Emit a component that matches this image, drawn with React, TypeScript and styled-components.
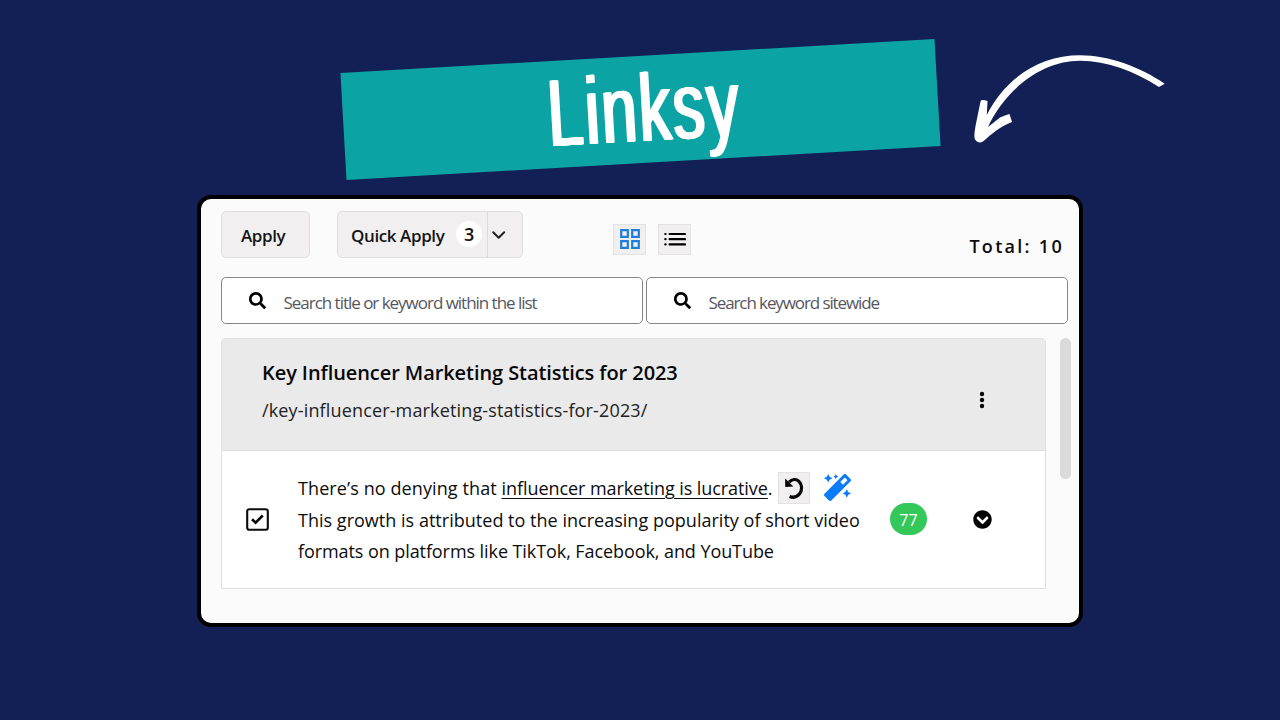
import React from 'react';
import styled, { createGlobalStyle } from 'styled-components';
import { FaChevronCircleDown, FaMagic, FaSearch } from 'react-icons/fa';

const GlobalStyle = createGlobalStyle`
  * { box-sizing: border-box; }
  body {
    margin: 0;
    background: #122056;
    color: #0c0c0c;
    font-family: "Open Sans", "Noto Sans", sans-serif;
  }
`;

const Page = styled.main`
  position: relative;
  display: flex;
  flex-direction: column;
  align-items: center;
  width: 1280px;
  height: 720px;
  padding-top: 56px;
  overflow: hidden;
`;

const Banner = styled.header`
  display: flex;
  align-items: center;
  justify-content: center;
  width: 595px;
  height: 107px;
  background: #0ba3a4;
  transform: rotate(-3.27deg);
`;

const BrandName = styled.h1`
  margin: 0;
  color: #fff;
  font: 400 95px/1 "Liberation Sans", sans-serif;
  letter-spacing: 3.5px;
  text-shadow: 1.2px 0 #fff, -1.2px 0 #fff, 2.3px 0 #fff, -2.3px 0 #fff;
  transform: translate(4px, -1px) scaleX(0.665);
`;

const ArrowDoodle = styled.svg`
  position: absolute;
  left: 960px;
  top: 40px;
`;

const Card = styled.section`
  display: flex;
  flex-direction: column;
  width: 886px;
  height: 431.5px;
  margin-top: 32px;
  padding: 12px 7px 0 20px;
  border: 4px solid #000;
  border-radius: 14px;
  background: #fbfbfb;
`;

const Toolbar = styled.div`
  display: flex;
  align-items: flex-start;
  height: 47px;
`;

const Button = styled.button`
  display: flex;
  align-items: center;
  height: 47px;
  padding: 2px 0 0;
  border: 1px solid #e0dfdf;
  border-radius: 5px;
  background: #f1eff0;
  color: #151515;
  font: 600 17px "Open Sans", sans-serif;
  letter-spacing: -0.4px;
`;

const ApplyButton = styled(Button)`
  width: 89px;
  padding-left: 19px;
`;

const QuickApplyButton = styled(Button)`
  width: 186px;
  margin-left: 27px;
  padding-left: 13px;
`;

const Count = styled.span`
  display: flex;
  align-items: center;
  justify-content: center;
  width: 26px;
  height: 26px;
  margin: 0 5px 3px auto;
  border-radius: 50%;
  background: #fff;
  font-size: 18px;
`;

const MenuToggle = styled.span`
  display: flex;
  align-items: center;
  align-self: stretch;
  width: 35px;
  margin-top: -2px;
  padding-left: 3px;
  border-left: 1px solid #dcdada;
`;

const ViewSwitch = styled.div`
  display: flex;
  gap: 12px;
  margin: 13px 0 0 90px;
`;

const ViewButton = styled.button`
  display: flex;
  align-items: center;
  justify-content: center;
  width: 33px;
  height: 31px;
  padding: 0 0 1px;
  border: 1px solid #e2e2e4;
  background: #f1eff0;
`;

const Total = styled.span`
  margin: 22px 8px 0 auto;
  font-size: 18px;
  font-weight: 600;
  line-height: 26px;
  letter-spacing: 2.3px;
`;

const SearchRow = styled.div`
  display: flex;
  gap: 3px;
  margin: 19px 4px 0 0;
`;

const SearchField = styled.label`
  display: flex;
  flex: 1;
  align-items: center;
  gap: 18px;
  height: 47px;
  padding: 0 0 0 26.5px;
  border: 1px solid #85878a;
  border-radius: 5px;
  background: #fff;
  color: #000;
`;

const SearchGlyph = styled(FaSearch)`
  margin-bottom: 1px;
`;

const Placeholder = styled.span<{ $tracking: number }>`
  padding-top: 3px;
  color: #55565f;
  font-size: 17px;
  letter-spacing: ${(p) => p.$tracking}px;
  white-space: nowrap;
`;

const Results = styled.div`
  display: flex;
  justify-content: space-between;
  margin-top: 14px;
`;

const Article = styled.article`
  width: 825px;
  height: 251px;
  border: 1px solid #dfdfdf;
  border-radius: 4px 4px 0 0;
  background: #fff;
`;

const ArticleHeader = styled.div`
  display: flex;
  align-items: center;
  justify-content: space-between;
  height: 112px;
  padding: 0 60px 0 40px;
  border-bottom: 1px solid #dfdfdf;
  background: #eaeaea;
`;

const Headings = styled.div`
  padding-bottom: 7px;
  white-space: nowrap;
`;

const Title = styled.h2`
  margin: 0;
  color: #080808;
  font-size: 20px;
  font-weight: 600;
  line-height: 38px;
  letter-spacing: -0.08px;
`;

const Slug = styled.p`
  margin: 0;
  color: #222;
  font-size: 18px;
  line-height: 37px;
  letter-spacing: 0.15px;
`;

const Dots = styled.svg`
  margin-top: 10px;
`;

const Suggestion = styled.div`
  display: flex;
  align-items: center;
  height: 136px;
  padding: 0 53px 0 24px;
`;

const Excerpt = styled.div`
  display: grid;
  grid-auto-rows: 31.6px;
  width: 563px;
  margin: 1px 0 0 29px;
  font-size: 18px;
  white-space: nowrap;
`;

const Line = styled.div<{ $tracking?: number }>`
  display: flex;
  align-items: center;
  letter-spacing: ${(p) => p.$tracking ?? 0}px;
  white-space: pre;
`;

const LinkText = styled.span`
  text-decoration: underline;
  text-decoration-thickness: 1px;
  text-underline-offset: 3px;
  letter-spacing: -0.07px;
`;

const UndoButton = styled.button`
  display: flex;
  align-items: center;
  justify-content: center;
  width: 32px;
  height: 32px;
  margin: 0 14px 0 5px;
  padding: 0;
  border: 1px solid #e2e2e4;
  background: #f1eff0;
`;

const Wand = styled(FaMagic)`
  color: #087cfa;
`;

const Score = styled.span`
  display: flex;
  align-items: center;
  justify-content: center;
  width: 37px;
  height: 32px;
  margin-left: 29px;
  padding-top: 1px;
  border-radius: 16px;
  background: #34c759;
  color: #fff;
  font-size: 16px;
`;

const Expand = styled(FaChevronCircleDown)`
  margin-left: auto;
  color: #000;
`;

const Scrollbar = styled.div`
  width: 11px;
  height: 141px;
  margin-right: 1px;
  border-radius: 6px;
  background: #dadada;
`;

const GridIcon = () => (
  <svg width="20" height="20" viewBox="0 0 20 20" fill="none" stroke="#1f7ddb" strokeWidth="2.2">
    <path d="M1.2 1.2h6.6v6.6H1.2zM12.2 1.2h6.6v6.6h-6.6zM1.2 12.2h6.6v6.6H1.2zM12.2 12.2h6.6v6.6h-6.6z" />
  </svg>
);

const ListIcon = () => (
  <svg width="22" height="16" viewBox="0 0 22 16" stroke="#000" strokeWidth="2.2" strokeLinecap="round">
    <path d="M5.6 3H21M5.6 8.2H21M5.6 13.4H21M1.3 3h.3M1.3 8.2h.3M1.3 13.4h.3" />
  </svg>
);

const ChevronIcon = () => (
  <svg width="16" height="10" viewBox="0 0 16 10" fill="none" stroke="#222" strokeWidth="2" strokeLinecap="round" strokeLinejoin="round">
    <path d="M2.2 2.3l5.5 5.4 5.5-5.4" />
  </svg>
);

const CheckboxIcon = () => (
  <svg width="23" height="23" viewBox="0 0 23 23" fill="none" stroke="#0a0a0a">
    <rect x="1.2" y="1.2" width="20.6" height="20.6" rx="2" strokeWidth="2.1" />
    <path d="M6 11.3l3.6 3.4L16.8 7.5" strokeWidth="2.6" />
  </svg>
);

const UndoIcon = () => (
  <svg width="20" height="24" viewBox="0 0 20 24" fill="none">
    <path d="M5 6.2C8.2 3 12 2.8 14.8 5.2c3.4 3 3.6 9 .8 12.6-2.4 3.1-6.4 4.1-10 2.7" stroke="#050505" strokeWidth="3.2" />
    <path d="M1.2 2.6v7.8c0 .3.2.5.5.5l7.6-.5z" fill="#050505" />
  </svg>
);

export default function App() {
  return (
    <>
      <GlobalStyle />
      <Page>
        <Banner>
          <BrandName>Linksy</BrandName>
        </Banner>
        <ArrowDoodle width="220" height="120" viewBox="0 0 220 120" fill="#fff">
          <path d="M204.7 43.7L199 47C174 31 148 21 120 20.8C78 21 43 54 28 87L40 77.5Q45 75 49.5 74L52 82C39 87 33 93 23 101.5Q18 104 15 99.5Q13.5 97 15.5 86L20.5 61.5Q21 59 27.5 61L26.8 75C46 37 81 15.3 120 15.3C150 15.5 180 27 204.7 43.7Z" />
        </ArrowDoodle>
        <Card>
          <Toolbar>
            <ApplyButton>Apply</ApplyButton>
            <QuickApplyButton>
              Quick Apply
              <Count>3</Count>
              <MenuToggle>
                <ChevronIcon />
              </MenuToggle>
            </QuickApplyButton>
            <ViewSwitch>
              <ViewButton aria-label="Grid view"><GridIcon /></ViewButton>
              <ViewButton aria-label="List view"><ListIcon /></ViewButton>
            </ViewSwitch>
            <Total>Total: 10</Total>
          </Toolbar>
          <SearchRow>
            <SearchField>
              <SearchGlyph size={17} />
              <Placeholder $tracking={-1.02}>Search title or keyword within the list</Placeholder>
            </SearchField>
            <SearchField>
              <SearchGlyph size={17} />
              <Placeholder $tracking={-1.1}>Search keyword sitewide</Placeholder>
            </SearchField>
          </SearchRow>
          <Results>
            <Article>
              <ArticleHeader>
                <Headings>
                  <Title>Key Influencer Marketing Statistics for 2023</Title>
                  <Slug>/key-influencer-marketing-statistics-for-2023/</Slug>
                </Headings>
                <Dots width="6" height="18" viewBox="0 0 6 18" fill="#0a0a0a">
                  <circle cx="3" cy="3" r="2.2" />
                  <circle cx="3" cy="9" r="2.2" />
                  <circle cx="3" cy="15" r="2.2" />
                </Dots>
              </ArticleHeader>
              <Suggestion>
                <CheckboxIcon />
                <Excerpt>
                  <Line $tracking={0.1}>
                    There’s no denying that <LinkText>influencer marketing is lucrative</LinkText>.
                    <UndoButton aria-label="Undo"><UndoIcon /></UndoButton>
                    <Wand size={27} />
                  </Line>
                  <Line $tracking={0.02}>This growth is attributed to the increasing popularity of short video</Line>
                  <Line $tracking={-0.08}>formats on platforms like TikTok, Facebook, and YouTube</Line>
                </Excerpt>
                <Score>77</Score>
                <Expand size={19} />
              </Suggestion>
            </Article>
            <Scrollbar />
          </Results>
        </Card>
      </Page>
    </>
  );
}
